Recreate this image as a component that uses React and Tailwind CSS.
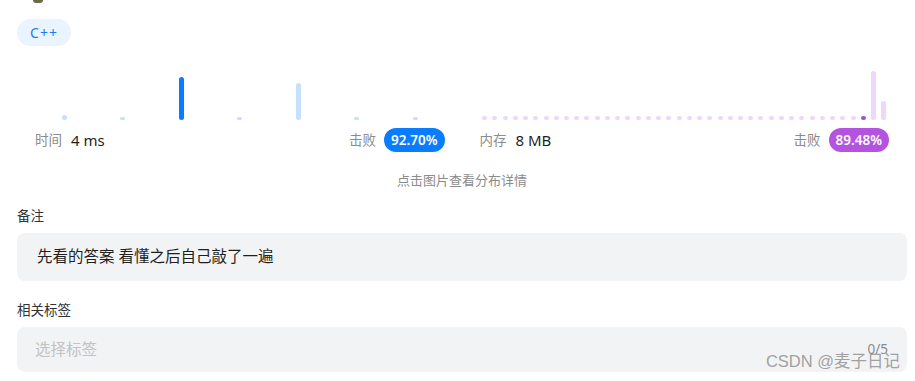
const timeBars = [
  { h: 5, c: "bg-[#c6e0ff]" },
  { h: 3, c: "bg-[#c6e0ff]" },
  { h: 43, c: "bg-[#0a7cff]" },
  { h: 3, c: "bg-[#c6e0ff]" },
  { h: 37, c: "bg-[#c6e0ff]" },
  { h: 3, c: "bg-[#c6e0ff]" },
  { h: 3, c: "bg-[#c6e0ff]" },
]

const memBars = [
  ...Array.from({ length: 37 }, () => ({ h: 4, c: "bg-[#efd6fa]" })),
  { h: 4, c: "bg-[#a650d6]" },
  { h: 49, c: "bg-[#efd6fa]" },
  { h: 19, c: "bg-[#efd6fa]" },
]

function Chart({ bars }) {
  return (
    <div className="flex items-end h-[60px]">
      {bars.map((b, i) => (
        <div key={i} className="flex-1 flex justify-center items-end h-full">
          <div className={`w-[5px] rounded-full ${b.c}`} style={{ height: b.h }} />
        </div>
      ))}
    </div>
  )
}

function Stat({ label, value, percent, badge }) {
  return (
    <div className="flex items-center justify-between h-[24px]">
      <div className="flex items-center">
        <span className="text-[13.5px] text-[#8c8c8c]">{label}</span>
        <span className="ml-[9px] text-[15px] text-[#1f1f1f]">{value}</span>
      </div>
      <div className="flex items-center">
        <span className="text-[13.5px] text-[#8c8c8c]">击败</span>
        <span className={`ml-[8px] h-[24px] px-[7px] rounded-full flex items-center text-white text-[13.5px] font-semibold ${badge}`}>
          {percent}
        </span>
      </div>
    </div>
  )
}

export default function App() {
  return (
    <div
      className="w-[915px] h-[381px] bg-white overflow-hidden relative"
      style={{ fontFamily: '"Noto Sans", "Noto Sans CJK SC", sans-serif' }}
    >
      <div className="pl-[17px] pr-[8px]">
        <div className="ml-[16px] w-[10px] h-[3px] rounded-b-full bg-[#6b6a4a]" />

        <div className="mt-[16px] w-[54px] h-[27px] rounded-full bg-[#eaf4ff] flex items-center justify-center text-[14px] tracking-[1px] text-[#1f7af5]">
          C++
        </div>

        <div className="px-[18px] grid grid-cols-2 gap-x-[35px] mt-[14px]">
          <div>
            <Chart bars={timeBars} />
            <div className="mt-[8px]">
              <Stat label="时间" value="4 ms" percent="92.70%" badge="bg-[#0a7cff]" />
            </div>
          </div>
          <div>
            <Chart bars={memBars} />
            <div className="mt-[8px]">
              <Stat label="内存" value="8 MB" percent="89.48%" badge="bg-[#b453e0]" />
            </div>
          </div>
        </div>

        <div className="mt-[18px] text-center text-[13px] leading-[20px] text-[#8c8c8c]">
          点击图片查看分布详情
        </div>

        <div className="mt-[16px] text-[13.5px] leading-[20px] text-[#333333]">备注</div>
        <div className="mt-[7px] h-[48px] rounded-[8px] bg-[#f2f3f5] flex items-center px-[20px] text-[15.5px] text-[#1f1f1f]">
          先看的答案 看懂之后自己敲了一遍
        </div>

        <div className="mt-[19px] text-[13.5px] leading-[20px] text-[#333333]">相关标签</div>
        <div className="mt-[7px] h-[45px] rounded-[8px] bg-[#f2f3f5] flex items-center justify-between pl-[18px] pr-[19px]">
          <span className="text-[15.5px] text-[#c2c2c2]">选择标签</span>
          <span className="text-[13.5px] text-[#8c8c8c]">0/5</span>
        </div>
      </div>

      <div
        className="absolute right-[15px] bottom-[9px] text-[16.5px] leading-[22px] text-[#8a8a8a]/80"
        style={{ fontFamily: '"Liberation Sans", "Noto Sans CJK SC", sans-serif' }}
      >
        CSDN @麦子日记
      </div>
    </div>
  )
}
